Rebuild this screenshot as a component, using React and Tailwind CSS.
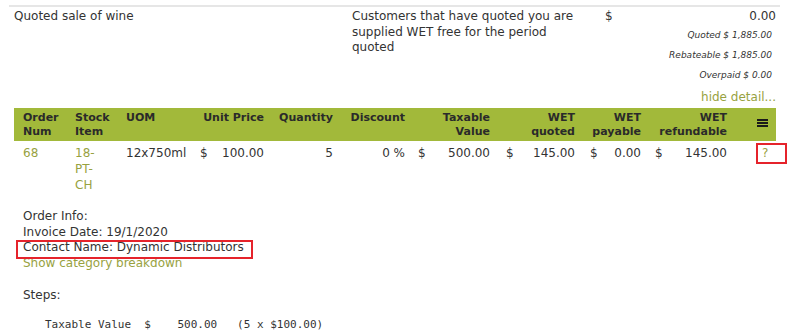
export default function App() {
  const cols =
    "grid grid-cols-[52px_51px_74px_64px_69px_72px_85px_85px_66px_86px_49px] pl-[9px]";
  const Money = ({ pl, v }) => (
    <div className={`flex justify-between ${pl}`}>
      <span>$</span>
      <span>{v}</span>
    </div>
  );
  return (
    <div className="w-[800px] h-[336px] overflow-hidden bg-white font-['DejaVu_Sans',sans-serif] text-[12px] leading-[15.5px] text-[#333]">
      <div className="pt-[5px]">
        <div className="ml-[9px] w-[771px] h-[2px] bg-[#e6e6e6]" />
      </div>

      <div className="ml-[14px] w-[762px] flex pt-[2px]">
        <div className="w-[338px]">Quoted sale of wine</div>
        <div className="w-[236px]">
          Customers that have quoted you are supplied WET free for the period quoted
        </div>
        <div className="ml-[17px]">$</div>
        <div className="flex-1 flex flex-col items-end">
          <div>0.00</div>
          <div className="pr-[4px] italic text-[9px] leading-[20px]">Quoted $ 1,885.00</div>
          <div className="pr-[4px] italic text-[9px] leading-[20px]">Rebateable $ 1,885.00</div>
          <div className="pr-[4px] italic text-[9px] leading-[20px]">Overpaid $ 0.00</div>
          <div className="mt-[5px] text-[#98a23f]">hide detail...</div>
        </div>
      </div>

      <div className="ml-[14px] w-[762px] mt-[3px]">
        <div
          className={`${cols} bg-[#a2b93a] pt-[3px] pb-[2px] text-[11px] leading-[14px] font-bold text-[#2a2a2a]`}
        >
          <div>Order<br />Num</div>
          <div>Stock<br />Item</div>
          <div>UOM</div>
          <div className="text-right">Unit Price</div>
          <div className="text-right">Quantity</div>
          <div className="text-right">Discount</div>
          <div className="text-right">Taxable<br />Value</div>
          <div className="text-right">WET<br />quoted</div>
          <div className="text-right">WET<br />payable</div>
          <div className="text-right">WET<br />refundable</div>
          <div className="pl-[30px] pt-[8px] flex flex-col gap-[1px]">
            <div className="w-[11px] h-[2px] bg-[#1a1a1a]" />
            <div className="w-[11px] h-[2px] bg-[#1a1a1a]" />
            <div className="w-[11px] h-[2px] bg-[#1a1a1a]" />
          </div>
        </div>

        <div className={`${cols} pt-[4px] leading-[16px]`}>
          <div className="text-[#98a23f]">68</div>
          <div className="text-[#98a23f] w-[32px]">18-PT-CH</div>
          <div>12x750ml</div>
          <Money pl="pl-0" v="100.00" />
          <div className="text-right">5</div>
          <div className="text-right">0 %</div>
          <Money pl="pl-[13px]" v="500.00" />
          <Money pl="pl-[16px]" v="145.00" />
          <Money pl="pl-[15px]" v="0.00" />
          <Money pl="pl-[14px]" v="145.00" />
          <div className="relative pl-[35px] text-[#98a23f]">
            ?
            <div className="absolute left-[29px] top-[-2px] w-[31px] h-[21px] border-2 border-[#e5232b]" />
          </div>
        </div>
      </div>

      <div className="ml-[23px] mt-[16px]">
        <div>Order Info:</div>
        <div>Invoice Date: 19/1/2020</div>
        <div>
          <span className="relative inline-block">
            Contact Name: Dynamic Distributors
            <span className="absolute -left-[7px] -right-[9px] top-0 bottom-[-3px] border-2 border-[#e5232b]" />
          </span>
        </div>
        <div className="text-[#98a23f]">Show category breakdown</div>
        <div className="mt-[17px]">Steps:</div>
        <div className="mt-[13px] ml-[22px] whitespace-pre font-['DejaVu_Sans_Mono',monospace] text-[11px]">
          {"Taxable Value  $    500.00   (5 x $100.00)"}
        </div>
      </div>
    </div>
  );
}
